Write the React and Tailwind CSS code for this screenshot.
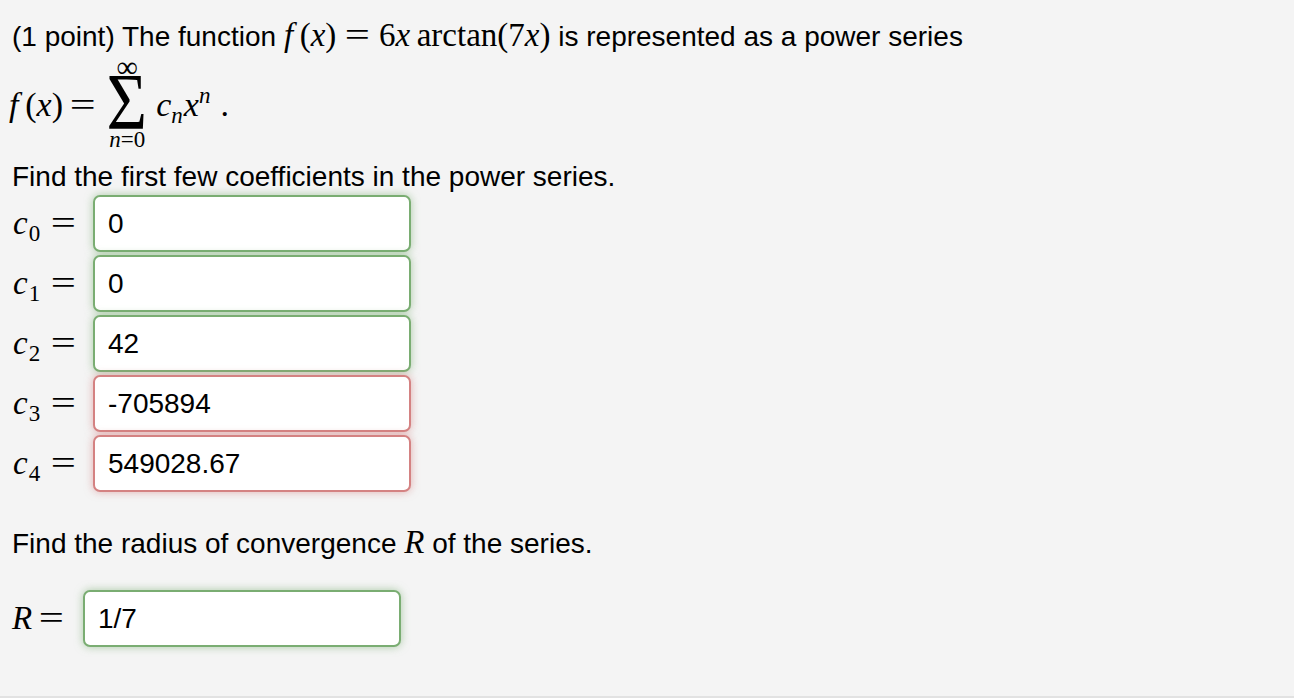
import React from "react";

const sans = { fontFamily: '"Liberation Sans", Arial, sans-serif' };
const serif = { fontFamily: '"Liberation Serif", "Times New Roman", serif' };

// MathJax's "=" is much wider than the text face's, so widen it a bit
function Eq({ className = "" }) {
  return (
    <span className={`inline-block scale-x-[1.35] ${className}`} style={serif}>
      =
    </span>
  );
}

// c_k label in MathJax-ish style
function Coef({ k }) {
  return (
    <span className="italic text-[33px] leading-none" style={serif}>
      c<span className="not-italic text-[23px] relative top-[7px] ml-[1px]">{k}</span>
    </span>
  );
}

function Answer({ label, value, ok, labelW }) {
  const ring = ok
    ? "border-[#7aad72] shadow-[0_0_8px_rgba(122,173,114,0.6)]"
    : "border-[#d48282] shadow-[0_0_8px_rgba(212,130,130,0.6)]";
  return (
    <div className="flex items-center h-[57px]">
      <div className={`${labelW} flex items-center shrink-0`}>{label}</div>
      <div
        className={`w-[318px] h-[57px] bg-white rounded-[7px] border-2 ${ring} flex items-center px-[13px] text-[28px] text-black`}
        style={sans}
      >
        {value}
      </div>
    </div>
  );
}

const COEFS = [
  { k: 0, value: "0", ok: true },
  { k: 1, value: "0", ok: true },
  { k: 2, value: "42", ok: true },
  { k: 3, value: "-705894", ok: false },
  { k: 4, value: "549028.67", ok: false },
];

export default function App() {
  return (
    <div className="w-[1294px] h-[698px] bg-[#f4f4f4] text-black overflow-hidden flex flex-col" style={sans}>
      <div className="flex-1 pl-[12px]">
        <p className="mt-[15px] h-[40px] leading-[40px] text-[28px] whitespace-nowrap">
          (1 point) The function{" "}
          <span className="text-[33px]" style={serif}>
            <i>f</i>&thinsp;(<i>x</i>)<Eq className="mx-[12px]" />6<i>x</i>&thinsp;arctan(7<i>x</i>)
          </span>{" "}
          is represented as a power series
        </p>

        <div className="h-[100px] flex items-center text-[34px] leading-none" style={serif}>
          <span className="whitespace-nowrap -ml-[3px]">
            <i>f</i>&thinsp;(<i>x</i>)
          </span>
          <Eq className="ml-[10px]" />
          <div className="flex flex-col items-center ml-[16px] w-[38px]">
            <div className="h-[22px] flex items-end text-[30px] leading-none translate-y-[3px]">∞</div>
            <div className="h-[46px] flex items-center justify-center">
              <span className="block text-[58px] leading-[46px] scale-x-[1.2] scale-y-[1.4]">Σ</span>
            </div>
            <div className="h-[28px] flex items-center text-[23px] leading-none whitespace-nowrap">
              <i>n</i>=0
            </div>
          </div>
          <span className="ml-[10px] italic whitespace-nowrap">
            c<span className="text-[23px] relative top-[7px] mr-[1px]">n</span>x
            <span className="text-[23px] relative -top-[13px]">n</span>
          </span>
          <span className="ml-[10px]">.</span>
        </div>

        <p className="mt-[4px] h-[36px] leading-[36px] text-[28px]">
          Find the first few coefficients in the power series.
        </p>

        <div className="flex flex-col gap-[3px]">
          {COEFS.map((c) => (
            <Answer
              key={c.k}
              labelW="w-[81px] pl-[1px]"
              ok={c.ok}
              value={c.value}
              label={
                <>
                  <Coef k={c.k} />
                  <Eq className="ml-[14px] text-[33px] leading-none" />
                </>
              }
            />
          ))}
        </div>

        <p className="mt-[32px] h-[36px] leading-[36px] text-[28px]">
          Find the radius of convergence <i className="text-[33px]" style={serif}>R</i> of the series.
        </p>

        <div className="mt-[30px]">
          <Answer
            labelW="w-[71px]"
            ok
            value="1/7"
            label={
              <span className="text-[33px] leading-none" style={serif}>
                <i>R</i>
                <Eq className="ml-[10px]" />
              </span>
            }
          />
        </div>
      </div>
      <div className="h-[2px] bg-[#e2e2e2]" />
    </div>
  );
}
